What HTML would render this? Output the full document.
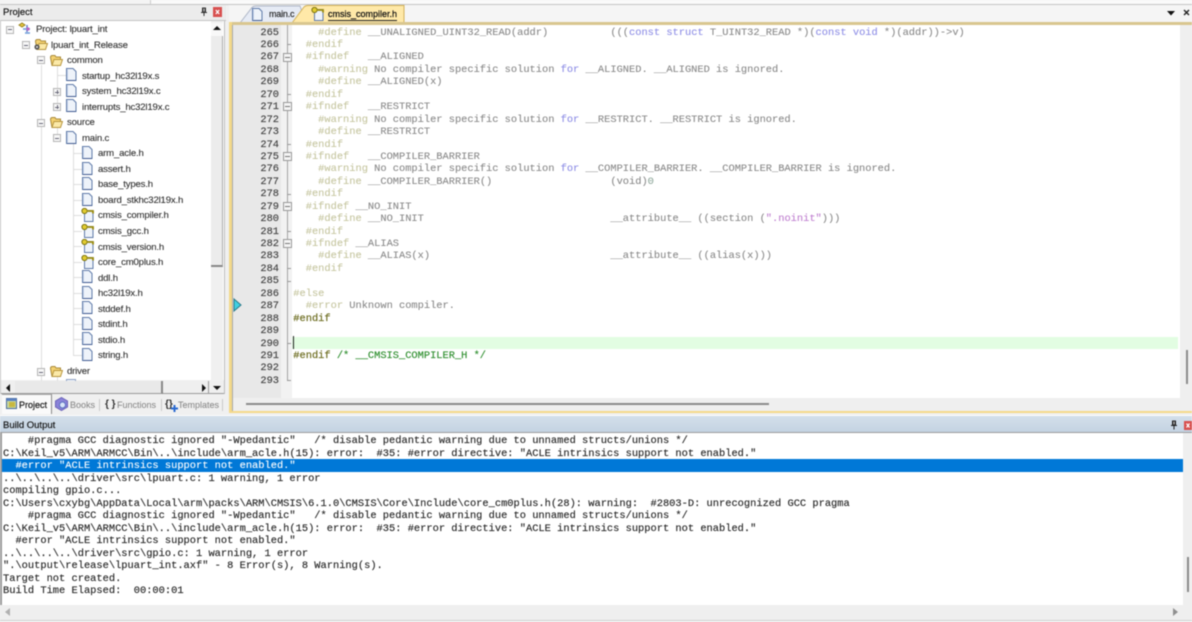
<!DOCTYPE html>
<html lang="en">
<head>
<meta charset="utf-8">
<title>Keil uVision</title>
<style>
html,body{margin:0;padding:0;width:1192px;height:622px;overflow:hidden;background:#f0f0f0}
#root{position:relative;width:1192px;height:622px;overflow:hidden;background:#f0f0f0;filter:blur(.4px)}
.a{position:absolute}
.hd{font:9.5px/15px "Liberation Sans",sans-serif;color:#111;-webkit-text-stroke:.15px #111}
/* tree */
.t{position:absolute;font:9.6px/14px "Liberation Sans",sans-serif;letter-spacing:-.18px;color:#303030;white-space:nowrap;-webkit-text-stroke:.1px #303030}
.ic{position:absolute}
.v{position:absolute;width:1px;background:#dedede}
.h{position:absolute;height:1px;background:#dedede}
.bx{position:absolute;width:6px;height:6px;border:1px solid #b4b4b4;background:#f7f7f7}
.bx:before{content:"";position:absolute;left:1px;right:1px;top:2.5px;height:1px;background:#667}
.bx.p:after{content:"";position:absolute;top:1px;bottom:1px;left:2.5px;width:1px;background:#667}
/* code */
pre{margin:0;font-family:"Liberation Mono",monospace}
.ln{position:absolute;left:233px;top:26.6px;width:46px;text-align:right;font:10.35px/12.43px "Liberation Mono",monospace;color:#444;-webkit-text-stroke:.15px #444}
.code{position:absolute;left:293.3px;top:26.6px;font-size:10.37px;line-height:12.43px;color:#8a8a8a;white-space:pre;-webkit-text-stroke:.1px #8a8a8a}
i{font-style:normal}
.p{color:#c6c6a0;-webkit-text-stroke:.1px #c6c6a0}
.k{color:#8f8fe6;-webkit-text-stroke:.1px #8f8fe6}
.o{color:#6e6e22;-webkit-text-stroke:.2px #6e6e22}
.g{color:#2f8f2f;-webkit-text-stroke:.15px #2f8f2f}
.s{color:#c080d0;-webkit-text-stroke:.1px #c080d0}
.n{color:#90b0a0}
.out{position:absolute;left:3px;top:435.2px;font-size:10.39px;line-height:12.48px;color:#2a2a2a;white-space:pre;-webkit-text-stroke:.15px #2a2a2a}
.sel{color:#fff;-webkit-text-stroke:.1px #fff}
.tab{position:absolute;top:399px;font:9px/13px "Liberation Sans",sans-serif;color:#8c8c8c;white-space:nowrap;-webkit-text-stroke:.1px #8c8c8c}
.fb{position:absolute;left:283px;width:7px;height:7px;border:1px solid #999;background:#f4f4f4}
.fb:before{content:"";position:absolute;left:1px;right:1px;top:3px;height:1px;background:#777}
.tk{position:absolute;left:287px;width:4px;height:1px;background:#999}
</style>
</head>
<body>
<div id="root">
<svg width="0" height="0" style="position:absolute">
<defs>
<symbol id="f" viewBox="0 0 12 13"><path d="M1.5 .5H8L11 3.5V12.5H1.5Z" fill="#eef3fa" stroke="#5f7aa8"/><path d="M2.5 1.5V11.5" stroke="#c6d4ea"/><path d="M2 12.5H11" stroke="#3f5a90"/></symbol>
<symbol id="fk" viewBox="0 0 14 14"><path d="M3.5 2.5H12V13.5H3.5Z" fill="#eef3fa" stroke="#5f7aa8"/><circle cx="3.5" cy="3" r="2.6" fill="#e2cc30" stroke="#7d7410"/><path d="M5.5 3H12V5.5" fill="none" stroke="#9a8c10" stroke-width="1.8"/></symbol>
<symbol id="d" viewBox="0 0 13 11"><path d="M.5 2.5C.5 1 1.5 .5 2.5 .5H5L6 2H10.5V10.5H2Z" fill="#f4d272" stroke="#a98a3a"/><path d="M2 10.5L4 4.5H12.5L10.5 10.5Z" fill="#fbe9a8" stroke="#b8963f"/></symbol>
</defs>
</svg>

<!-- top strip -->
<div class="a" style="left:0;top:0;width:1192px;height:4px;background:#fafafa"></div>
<div class="a" style="left:0;top:4px;width:1192px;height:1px;background:#c4c4c4"></div>
<div class="a" style="left:0;top:0;width:150px;height:4px;background:#f4f4f4;border-right:1px solid #ccc"></div>

<!-- LEFT PANEL -->
<div class="a" style="left:0;top:5px;width:226px;height:15px;background:#ececec"></div>
<div class="a hd" style="left:3px;top:4.5px">Project</div>
<svg class="a" style="left:200px;top:7px" width="8" height="9"><path d="M2 .5H6V5H7V6H4.5V9H3.5V6H1V5H2Z" fill="#333"/><path d="M4 1.5V4.5" stroke="#ddd"/></svg>
<div class="a" style="left:213px;top:7px;width:9px;height:10px;background:#d8504f"></div>
<svg class="a" style="left:213px;top:7px" width="9" height="10"><path d="M2.8 3L6.2 7M6.2 3L2.8 7" stroke="#fff" stroke-width="1.3"/></svg>
<div class="a" style="left:0;top:20px;width:226px;height:1px;background:#c4c4c4"></div>

<div class="a" style="left:1px;top:21px;width:224px;height:359px;background:#fff;overflow:hidden">
</div>
<div class="a" style="left:0;top:21px;width:1px;height:373px;background:#c8c8c8"></div>

<!-- tree lines -->
<div class="v" style="left:41px;top:65px;height:316px"></div>
<div class="v" style="left:57px;top:65px;height:45px"></div>
<div class="v" style="left:57px;top:128px;height:12px"></div>
<div class="v" style="left:57px;top:376px;height:5px"></div>
<div class="v" style="left:73px;top:144px;height:212px"></div>
<div class="h" style="left:58px;top:75px;width:8px"></div>
<div class="h" style="left:74px;top:153px;width:8px"></div>
<div class="h" style="left:74px;top:169px;width:8px"></div>
<div class="h" style="left:74px;top:184px;width:8px"></div>
<div class="h" style="left:74px;top:200px;width:8px"></div>
<div class="h" style="left:74px;top:215px;width:8px"></div>
<div class="h" style="left:74px;top:231px;width:8px"></div>
<div class="h" style="left:74px;top:246px;width:8px"></div>
<div class="h" style="left:74px;top:262px;width:8px"></div>
<div class="h" style="left:74px;top:277px;width:8px"></div>
<div class="h" style="left:74px;top:293px;width:8px"></div>
<div class="h" style="left:74px;top:308px;width:8px"></div>
<div class="h" style="left:74px;top:324px;width:8px"></div>
<div class="h" style="left:74px;top:339px;width:8px"></div>
<div class="h" style="left:74px;top:355px;width:8px"></div>

<!-- tree expanders -->
<div class="bx" style="left:6px;top:25.5px"></div>
<div class="bx" style="left:22px;top:41px"></div>
<div class="bx" style="left:37px;top:56px"></div>
<div class="bx p" style="left:53px;top:88px"></div>
<div class="bx p" style="left:53px;top:103px"></div>
<div class="bx" style="left:37px;top:119px"></div>
<div class="bx" style="left:53px;top:134px"></div>
<div class="bx" style="left:37px;top:368px"></div>

<!-- tree icons -->
<svg class="ic" style="left:18px;top:22px" width="14" height="13"><path d="M1 3L4 1L7 3L4 5Z" fill="#e8c840" stroke="#9a8420"/><path d="M9 3V10" stroke="#5878c8" stroke-width="1.4"/><path d="M5 7H12M7 11H12" stroke="#6a9ad8" stroke-width="1.4"/><circle cx="10" cy="7" r="1.6" fill="#c060c0"/></svg>
<svg class="ic" style="left:33px;top:39px" width="15" height="12"><use href="#d" x="2" y="0" width="13" height="11"/><circle cx="4" cy="8" r="2.6" fill="#555"/><circle cx="4" cy="8" r="1" fill="#ddd"/></svg>
<svg class="ic" style="left:50px;top:55px" width="13" height="11"><use href="#d"/></svg>
<svg class="ic" style="left:50px;top:117px" width="13" height="11"><use href="#d"/></svg>
<svg class="ic" style="left:50px;top:366px" width="13" height="11"><use href="#d"/></svg>
<svg class="ic" style="left:65px;top:68px" width="12" height="13"><use href="#f"/></svg>
<svg class="ic" style="left:65px;top:84px" width="12" height="13"><use href="#f"/></svg>
<svg class="ic" style="left:65px;top:99px" width="12" height="13"><use href="#f"/></svg>
<svg class="ic" style="left:65px;top:131px" width="12" height="13"><use href="#f"/></svg>
<svg class="ic" style="left:81px;top:146px" width="12" height="13"><use href="#f"/></svg>
<svg class="ic" style="left:81px;top:162px" width="12" height="13"><use href="#f"/></svg>
<svg class="ic" style="left:81px;top:177px" width="12" height="13"><use href="#f"/></svg>
<svg class="ic" style="left:81px;top:193px" width="12" height="13"><use href="#f"/></svg>
<svg class="ic" style="left:81px;top:208px" width="14" height="14"><use href="#fk"/></svg>
<svg class="ic" style="left:81px;top:224px" width="14" height="14"><use href="#fk"/></svg>
<svg class="ic" style="left:81px;top:239px" width="14" height="14"><use href="#fk"/></svg>
<svg class="ic" style="left:81px;top:255px" width="14" height="14"><use href="#fk"/></svg>
<svg class="ic" style="left:81px;top:270px" width="12" height="13"><use href="#f"/></svg>
<svg class="ic" style="left:81px;top:286px" width="12" height="13"><use href="#f"/></svg>
<svg class="ic" style="left:81px;top:301px" width="12" height="13"><use href="#f"/></svg>
<svg class="ic" style="left:81px;top:317px" width="12" height="13"><use href="#f"/></svg>
<svg class="ic" style="left:81px;top:332px" width="12" height="13"><use href="#f"/></svg>
<svg class="ic" style="left:81px;top:348px" width="12" height="13"><use href="#f"/></svg>
<svg class="ic" style="left:66px;top:379px" width="11" height="3"><rect x=".5" y=".5" width="9" height="4" fill="#eef3fa" stroke="#8fa2c4"/></svg>

<!-- tree text -->
<div class="t" style="left:36px;top:23px">Project: lpuart_int</div>
<div class="t" style="left:51px;top:38.5px">lpuart_int_Release</div>
<div class="t" style="left:67px;top:54px">common</div>
<div class="t" style="left:82px;top:70px">startup_hc32l19x.s</div>
<div class="t" style="left:82px;top:85px">system_hc32l19x.c</div>
<div class="t" style="left:82px;top:101px">interrupts_hc32l19x.c</div>
<div class="t" style="left:67px;top:116px">source</div>
<div class="t" style="left:82px;top:132px">main.c</div>
<div class="t" style="left:98px;top:147px">arm_acle.h</div>
<div class="t" style="left:98px;top:163px">assert.h</div>
<div class="t" style="left:98px;top:178px">base_types.h</div>
<div class="t" style="left:98px;top:194px">board_stkhc32l19x.h</div>
<div class="t" style="left:98px;top:209px">cmsis_compiler.h</div>
<div class="t" style="left:98px;top:225px">cmsis_gcc.h</div>
<div class="t" style="left:98px;top:241px">cmsis_version.h</div>
<div class="t" style="left:98px;top:256px">core_cm0plus.h</div>
<div class="t" style="left:98px;top:272px">ddl.h</div>
<div class="t" style="left:98px;top:287px">hc32l19x.h</div>
<div class="t" style="left:98px;top:303px">stddef.h</div>
<div class="t" style="left:98px;top:318px">stdint.h</div>
<div class="t" style="left:98px;top:334px">stdio.h</div>
<div class="t" style="left:98px;top:349px">string.h</div>
<div class="t" style="left:67px;top:365px">driver</div>

<!-- tree vscroll -->
<div class="a" style="left:211px;top:21px;width:12px;height:360px;background:#f0f0f0"></div>
<div class="a" style="left:211px;top:23px;width:12px;height:13px;background:#f8f8f8;border-bottom:1px solid #aaa"></div>
<svg class="a" style="left:213px;top:26px" width="8" height="5"><path d="M0 4H8L4 0Z" fill="#111"/></svg>
<div class="a" style="left:211px;top:36px;width:12px;height:231px;background:#ececec;border-bottom:2px solid #888;border-right:1px solid #aaa;box-sizing:border-box"></div>
<!-- tree hscroll -->
<div class="a" style="left:1px;top:381px;width:223px;height:13px;background:#efefef;border-bottom:1px solid #9a9a9a;box-sizing:border-box"></div>
<div class="a" style="left:15px;top:381px;width:148px;height:13px;background:#e9e9e9;border-right:2px solid #888;border-bottom:1px solid #999;box-sizing:border-box"></div>
<svg class="a" style="left:6px;top:384px" width="5" height="8"><path d="M4 0V8L0 4Z" fill="#111"/></svg>
<svg class="a" style="left:202px;top:384px" width="5" height="8"><path d="M0 0V8L4 4Z" fill="#111"/></svg>
<div class="a" style="left:208px;top:381px;width:1px;height:12px;background:#999"></div>
<svg class="a" style="left:213px;top:386px" width="8" height="5"><path d="M0 0H8L4 4Z" fill="#111"/></svg>
<div class="a" style="left:224px;top:21px;width:1px;height:373px;background:#bcbcbc"></div>

<!-- bottom tabs -->
<div class="a" style="left:2px;top:394px;width:50px;height:20px;background:#fafafa;border-right:1px solid #8a8a8a;border-top:1px solid #aaa;box-sizing:border-box"></div>
<svg class="a" style="left:6px;top:398px" width="11" height="11"><rect x=".5" y=".5" width="10" height="10" fill="#c8d8a0" stroke="#4a6a9a"/><rect x=".5" y=".5" width="10" height="2.5" fill="#5a80c0"/><rect x="3" y="4" width="6" height="5" fill="#c8b840"/></svg>
<div class="tab" style="left:19px;color:#222;-webkit-text-stroke:.25px #222">Project</div>
<svg class="a" style="left:55px;top:397px" width="13" height="14"><path d="M6.5 .5L12.5 4V10L6.5 13.5L.5 10V4Z" fill="#8a82d8" stroke="#6a62b8"/><circle cx="7.5" cy="8" r="3" fill="#d8e4f8" stroke="#5a70c0"/></svg>
<div class="tab" style="left:70px">Books</div>
<div class="a" style="left:99px;top:399px;width:1px;height:12px;background:#c8c8c8"></div>
<div class="a" style="left:105px;top:398px;font:bold 10px/13px 'Liberation Sans',sans-serif;color:#333">{ }</div>
<div class="tab" style="left:117px">Functions</div>
<div class="a" style="left:161px;top:399px;width:1px;height:12px;background:#c8c8c8"></div>
<div class="a" style="left:165px;top:398px;font:bold 10px/13px 'Liberation Sans',sans-serif;color:#333">{}</div>
<svg class="a" style="left:171px;top:405px" width="7" height="7"><path d="M3.5 0V7M0 3.5H7" stroke="#2a6ad0" stroke-width="2"/></svg>
<div class="tab" style="left:178px">Templates</div>
<div class="a" style="left:222px;top:399px;width:1px;height:12px;background:#c8c8c8"></div>

<!-- EDITOR tabs -->
<div class="a" style="left:226px;top:5px;width:966px;height:17px;background:#f5f5f5"></div>
<svg class="a" style="left:228px;top:5px" width="180" height="19">
<path d="M12 18L24 2.5C25 1.5 26 1 28 1H72L78 18Z" fill="#e6ebf5" stroke="#aeb6c6"/>
<path d="M64 18L76 2C77 1 78 .5 80 .5H176V18Z" fill="#ffe9a8" stroke="#d4b35a"/>
</svg>
<svg class="a" style="left:251px;top:8px" width="12" height="13"><use href="#f"/></svg>
<div class="a" style="left:269px;top:8px;font:9px/13px 'Liberation Sans',sans-serif;letter-spacing:-.2px;color:#222;-webkit-text-stroke:.15px #222">main.c</div>
<svg class="a" style="left:311px;top:7px" width="14" height="14"><use href="#fk"/></svg>
<div class="a" style="left:328px;top:8px;font:9px/12px 'Liberation Sans',sans-serif;color:#111;-webkit-text-stroke:.25px #111;border-bottom:1px solid #222">cmsis_compiler.h</div>
<svg class="a" style="left:1167px;top:11px" width="8" height="5"><path d="M0 0H8L4 4.5Z" fill="#111"/></svg>
<svg class="a" style="left:1183px;top:9px" width="8" height="8"><path d="M1 1L6 6M6 1L1 6" stroke="#222" stroke-width="1.4"/></svg>

<!-- EDITOR frame -->
<div class="a" style="left:226px;top:5px;width:3px;height:410px;background:#f0f0f0"></div>
<div class="a" style="left:229px;top:22px;width:963px;height:3px;background:#d9c68f"></div>
<div class="a" style="left:229px;top:22px;width:3px;height:391px;background:#f3d98a"></div>
<div class="a" style="left:229px;top:411px;width:963px;height:2px;background:#f6d98a"></div>
<div class="a" style="left:232px;top:25px;width:1px;height:386px;background:#a8a8a8"></div>
<div class="a" style="left:233px;top:25px;width:947px;height:373px;background:#fff"></div>
<div class="a" style="left:233px;top:25px;width:48px;height:373px;background:#e8e8e8"></div>
<div class="a" style="left:281px;top:25px;width:11px;height:373px;background:#f2f2f2"></div>
<div class="a" style="left:233px;top:398px;width:959px;height:13px;background:#efefef"></div>
<div class="a" style="left:1180px;top:25px;width:12px;height:386px;background:#efefef"></div>
<div class="a" style="left:246px;top:403px;width:523px;height:2px;background:#8c8c8c"></div>
<div class="a" style="left:1186px;top:350px;width:2px;height:34px;background:#8c8c8c"></div>

<!-- current line + arrow -->
<div class="a" style="left:292px;top:337px;width:886px;height:12px;background:#e2fde2"></div>
<div class="a" style="left:293px;top:336px;width:1px;height:13px;background:#222"></div>
<svg class="a" style="left:233px;top:298px" width="9" height="14"><path d="M1 1V13L8 7Z" fill="#3fd0e2" stroke="#2a7a8a"/></svg>

<!-- fold margin -->
<div class="a" style="left:287px;top:25px;width:1px;height:355px;background:#a4a4a4"></div>
<div class="tk" style="top:44px"></div>
<div class="tk" style="top:94px"></div>
<div class="tk" style="top:144px"></div>
<div class="tk" style="top:194px"></div>
<div class="tk" style="top:231px"></div>
<div class="tk" style="top:268px"></div>
<div class="tk" style="top:281px"></div>
<div class="tk" style="top:343px"></div>
<div class="tk" style="top:380px"></div>
<div class="fb" style="top:52.5px"></div>
<div class="fb" style="top:102px"></div>
<div class="fb" style="top:152px"></div>
<div class="fb" style="top:202px"></div>
<div class="fb" style="top:239px"></div>

<!-- line numbers -->
<pre class="ln">265
266
267
268
269
270
271
272
273
274
275
276
277
278
279
280
281
282
283
284
285
286
287
288
289
290
291
292
293</pre>

<!-- code -->
<pre class="code">    <i class="p">#define</i> __UNALIGNED_UINT32_READ(addr)          (((<i class="k">const struct</i> T_UINT32_READ *)(<i class="k">const void</i> *)(addr))-&gt;v)
  <i class="p">#endif</i>
  <i class="p">#ifndef</i>   __ALIGNED
    <i class="p">#warning</i> No compiler specific solution <i class="k">for</i> __ALIGNED. __ALIGNED is ignored.
    <i class="p">#define</i> __ALIGNED(x)
  <i class="p">#endif</i>
  <i class="p">#ifndef</i>   __RESTRICT
    <i class="p">#warning</i> No compiler specific solution <i class="k">for</i> __RESTRICT. __RESTRICT is ignored.
    <i class="p">#define</i> __RESTRICT
  <i class="p">#endif</i>
  <i class="p">#ifndef</i>   __COMPILER_BARRIER
    <i class="p">#warning</i> No compiler specific solution <i class="k">for</i> __COMPILER_BARRIER. __COMPILER_BARRIER is ignored.
    <i class="p">#define</i> __COMPILER_BARRIER()                   (void)<i class="n">0</i>
  <i class="p">#endif</i>
  <i class="p">#ifndef</i> __NO_INIT
    <i class="p">#define</i> __NO_INIT                              __attribute__ ((section (<i class="s">".noinit"</i>)))
  <i class="p">#endif</i>
  <i class="p">#ifndef</i> __ALIAS
    <i class="p">#define</i> __ALIAS(x)                             __attribute__ ((alias(x)))
  <i class="p">#endif</i>

<i class="p">#else</i>
  <i class="p">#error</i> Unknown compiler.
<i class="o">#endif</i>


<i class="o">#endif</i> <i class="g">/* __CMSIS_COMPILER_H */</i></pre>

<!-- BUILD OUTPUT -->
<div class="a" style="left:0;top:415px;width:1192px;height:1px;background:#fdfdfd"></div>
<div class="a" style="left:0;top:416px;width:1192px;height:16px;background:linear-gradient(#d3dfea,#c4d3e2)"></div>
<div class="a" style="left:0;top:432px;width:1192px;height:1px;background:#9c9c9c"></div>
<div class="a hd" style="left:3px;top:417.5px">Build Output</div>
<svg class="a" style="left:1170px;top:420px" width="8" height="10"><path d="M2 .5H6V5H7V6H4.5V9.5H3.5V6H1V5H2Z" fill="#222"/><path d="M4 1.5V4.5" stroke="#ddd"/></svg>
<div class="a" style="left:1184px;top:421px;width:8px;height:9px;background:#d8504f"></div>
<svg class="a" style="left:1184px;top:421px" width="8" height="9"><path d="M2.5 2.5L5.5 6.5M5.5 2.5L2.5 6.5" stroke="#fff" stroke-width="1.2"/></svg>
<div class="a" style="left:0;top:433px;width:1183px;height:172px;background:#fff"></div>
<div class="a" style="left:0;top:433px;width:2px;height:172px;background:#9c9c9c"></div>
<div class="a" style="left:1183px;top:433px;width:9px;height:172px;background:#efefef"></div>
<div class="a" style="left:1187px;top:557px;width:2px;height:35px;background:#8c8c8c"></div>
<div class="a" style="left:2px;top:459px;width:1181px;height:13px;background:#0078d7"></div>
<pre class="out">    #pragma GCC diagnostic ignored "-Wpedantic"   /* disable pedantic warning due to unnamed structs/unions */
C:\Keil_v5\ARM\ARMCC\Bin\..\include\arm_acle.h(15): error:  #35: #error directive: "ACLE intrinsics support not enabled."
<span class="sel">  #error "ACLE intrinsics support not enabled."</span>
..\..\..\..\driver\src\lpuart.c: 1 warning, 1 error
compiling gpio.c...
C:\Users\cxybg\AppData\Local\arm\packs\ARM\CMSIS\6.1.0\CMSIS\Core\Include\core_cm0plus.h(28): warning:  #2803-D: unrecognized GCC pragma
    #pragma GCC diagnostic ignored "-Wpedantic"   /* disable pedantic warning due to unnamed structs/unions */
C:\Keil_v5\ARM\ARMCC\Bin\..\include\arm_acle.h(15): error:  #35: #error directive: "ACLE intrinsics support not enabled."
  #error "ACLE intrinsics support not enabled."
..\..\..\..\driver\src\gpio.c: 1 warning, 1 error
".\output\release\lpuart_int.axf" - 8 Error(s), 8 Warning(s).
Target not created.
Build Time Elapsed:  00:00:01</pre>
<div class="a" style="left:0;top:605px;width:1192px;height:15px;background:#efefef"></div>
<svg class="a" style="left:5px;top:608px" width="6" height="9"><path d="M5 0V8L0 4Z" fill="#b0b0b0"/></svg>
<svg class="a" style="left:1173px;top:608px" width="6" height="9"><path d="M0 0V8L5 4Z" fill="#909090"/></svg>
<div class="a" style="left:0;top:620px;width:1192px;height:2px;background:#f8f8f8;border-top:1px solid #d0d0d0;box-sizing:border-box"></div>
</div>
</body>
</html>
